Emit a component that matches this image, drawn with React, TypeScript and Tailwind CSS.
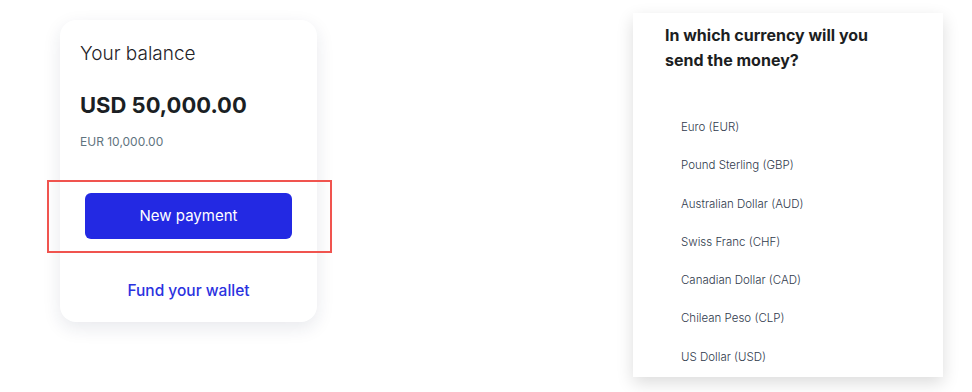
const currencies = [
  "Euro (EUR)",
  "Pound Sterling (GBP)",
  "Australian Dollar (AUD)",
  "Swiss Franc (CHF)",
  "Canadian Dollar (CAD)",
  "Chilean Peso (CLP)",
  "US Dollar (USD)",
];

export default function App() {
  return (
    <div
      className="flex h-[392px] w-[972px] overflow-hidden bg-white"
      style={{ fontFamily: "Inter, 'Noto Sans', sans-serif" }}
    >
      {/* Balance card */}
      <div className="ml-[60px] mt-[20px] flex h-[302px] w-[257px] flex-col rounded-2xl bg-white shadow-[0_6px_18px_rgba(30,40,80,0.10)]">
        <div className="pl-5 pt-[21px] text-[19px] leading-[26px] font-light text-[#1f2328]">
          Your balance
        </div>
        <div className="mt-[23px] pl-5 text-[22px] leading-[30px] font-bold text-[#1b1f24]">
          USD 50,000.00
        </div>
        <div className="mt-[14px] pl-5 text-[12px] leading-4 text-[#5f7480]">
          EUR 10,000.00
        </div>
        <div className="relative mt-[43px]">
          <div className="absolute left-[-13px] top-[-13px] h-[73px] w-[285px] border-2 border-[#f0544f]" />
          <button className="mx-[25px] flex h-[46px] w-[207px] items-center justify-center rounded-md bg-[#2329e3] text-[15px] text-white">
            New payment
          </button>
        </div>
        <div className="mt-[40px] text-center text-[15.5px] leading-6 font-medium text-[#2b32e0]">
          Fund your wallet
        </div>
      </div>

      {/* Currency list */}
      <div className="ml-[316px] mt-[13px] h-[364px] w-[310px] bg-white shadow-[0_6px_16px_rgba(0,0,0,0.14)]">
        <div className="pl-8 pt-[10px] text-[16px] leading-[25px] font-bold text-[#1c1e22]">
          In which currency will you
          <br />
          send the money?
        </div>
        <ul className="mt-[46px] pl-12">
          {currencies.map((c) => (
            <li key={c} className="h-[38.3px] text-[11.5px] leading-4 font-light text-[#2f3a4c]">
              {c}
            </li>
          ))}
        </ul>
      </div>
    </div>
  );
}
